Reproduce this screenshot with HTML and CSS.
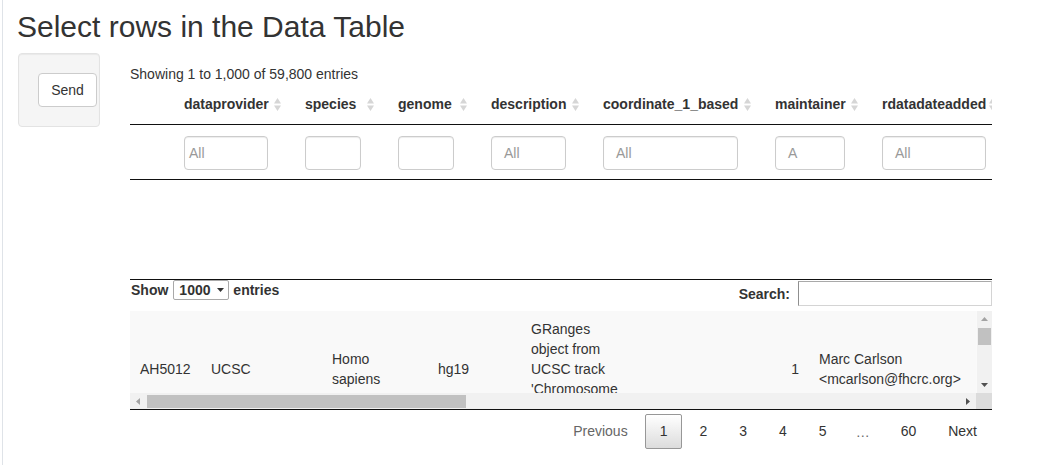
FILE: index.html
```html
<!DOCTYPE html>
<html lang="en">
<head>
<meta charset="utf-8">
<title>Select rows in the Data Table</title>
<link rel="stylesheet" href="styles.css">
</head>
<body>
<div class="frame">
  <h2 class="title">Select rows in the Data Table</h2>
  <div class="layout">
    <aside class="well"><button class="btn" type="button">Send</button></aside>
    <main class="main">
      <div class="info">Showing 1 to 1,000 of 59,800 entries</div>
      <div class="head-wrap">
        <table class="head">
          <colgroup>
            <col class="c-id"><col class="c-dp"><col class="c-sp"><col class="c-ge"><col class="c-de"><col class="c-co"><col class="c-ma"><col class="c-rd">
          </colgroup>
          <thead>
            <tr>
              <th></th>
              <th><span class="th-in">dataprovider<svg class="sort" viewBox="0 0 7 13" width="7" height="13"><path d="M3.5 0L7 5.5H0Z M0 7.5H7L3.5 13Z"/></svg></span></th>
              <th><span class="th-in">species<svg class="sort" viewBox="0 0 7 13" width="7" height="13"><path d="M3.5 0L7 5.5H0Z M0 7.5H7L3.5 13Z"/></svg></span></th>
              <th><span class="th-in">genome<svg class="sort" viewBox="0 0 7 13" width="7" height="13"><path d="M3.5 0L7 5.5H0Z M0 7.5H7L3.5 13Z"/></svg></span></th>
              <th><span class="th-in">description<svg class="sort" viewBox="0 0 7 13" width="7" height="13"><path d="M3.5 0L7 5.5H0Z M0 7.5H7L3.5 13Z"/></svg></span></th>
              <th><span class="th-in">coordinate_1_based<svg class="sort" viewBox="0 0 7 13" width="7" height="13"><path d="M3.5 0L7 5.5H0Z M0 7.5H7L3.5 13Z"/></svg></span></th>
              <th><span class="th-in">maintainer<svg class="sort" viewBox="0 0 7 13" width="7" height="13"><path d="M3.5 0L7 5.5H0Z M0 7.5H7L3.5 13Z"/></svg></span></th>
              <th><span class="th-in">rdatadateadded<svg class="sort" viewBox="0 0 7 13" width="7" height="13"><path d="M3.5 0L7 5.5H0Z M0 7.5H7L3.5 13Z"/></svg></span></th>
            </tr>
            <tr class="filters">
              <td></td>
              <td><span class="fi f-dp f-tight">All</span></td>
              <td><span class="fi f-sp"></span></td>
              <td><span class="fi f-ge"></span></td>
              <td><span class="fi f-de">All</span></td>
              <td><span class="fi f-co">All</span></td>
              <td><span class="fi f-ma">A</span></td>
              <td><span class="fi f-rd">All</span></td>
            </tr>
          </thead>
        </table>
      </div>
      <div class="gap"></div>
      <div class="controls">
        <div class="length">
          <span>Show</span>
          <span class="select">1000<svg class="caret" viewBox="0 0 7 4" width="7" height="4"><path d="M0 0H7L3.5 4Z"/></svg></span>
          <span>entries</span>
        </div>
        <div class="search">
          <span>Search:</span>
          <span class="search-box"></span>
        </div>
      </div>
      <div class="scroll">
        <div class="scroll-top">
          <div class="viewport">
            <table class="body">
              <colgroup>
                <col class="b-id"><col class="b-dp"><col class="b-sp"><col class="b-ge"><col class="b-de"><col class="b-co"><col class="b-ma">
              </colgroup>
              <tbody>
                <tr class="odd">
                  <td>AH5012</td>
                  <td>UCSC</td>
                  <td>Homo sapiens</td>
                  <td>hg19</td>
                  <td>GRanges object from UCSC track 'Chromosome Band'</td>
                  <td class="num">1</td>
                  <td>Marc Carlson &lt;mcarlson@fhcrc.org&gt;</td>
                </tr>
              </tbody>
            </table>
          </div>
          <div class="vbar">
            <span class="arrow"><svg viewBox="0 0 7 4" width="7" height="4"><path class="dis" d="M3.5 0L7 4H0Z"/></svg></span>
            <span class="vthumb"></span>
            <span class="fill"></span>
            <span class="arrow"><svg viewBox="0 0 7 4" width="7" height="4"><path d="M0 0H7L3.5 4Z"/></svg></span>
          </div>
        </div>
        <div class="hbar-row">
          <div class="hbar">
            <span class="arrow"><svg viewBox="0 0 4 7" width="4" height="7"><path class="dis" d="M4 0V7L0 3.5Z"/></svg></span>
            <span class="hthumb"></span>
            <span class="fill"></span>
            <span class="arrow"><svg viewBox="0 0 4 7" width="4" height="7"><path d="M0 0L4 3.5L0 7Z"/></svg></span>
          </div>
          <div class="corner"></div>
        </div>
      </div>
      <div class="pager">
        <span class="pg prev">Previous</span>
        <span class="pg current">1</span>
        <span class="pg">2</span>
        <span class="pg">3</span>
        <span class="pg">4</span>
        <span class="pg">5</span>
        <span class="ellipsis">…</span>
        <span class="pg">60</span>
        <span class="pg">Next</span>
      </div>
    </main>
  </div>
</div>
</body>
</html>
```

FILE: styles.css
```css
html, body {
  margin: 0;
  padding: 0;
  background: #fff;
}

body {
  font-family: "Liberation Sans", Arial, Helvetica, sans-serif;
  font-size: 14px;
  line-height: 20px;
  color: #333;
}

.frame {
  margin-left: 2px;
  border-left: 1px solid #dfe3e8;
  height: 100vh;
  box-sizing: border-box;
  padding: 0 15px;
  overflow: hidden;
}

.title {
  margin: 10px 0 10px -1px;
  font-size: 30px;
  line-height: 33px;
  font-weight: 500;
  color: #333;
}

.layout {
  display: flex;
  align-items: flex-start;
  gap: 30px;
}

.well {
  flex: none;
  width: 82px;
  height: 74px;
  box-sizing: border-box;
  padding: 19px;
  background: #f5f5f5;
  border: 1px solid #e3e3e3;
  border-radius: 4px;
  box-shadow: inset 0 1px 1px rgba(0, 0, 0, .05);
}

.btn {
  display: block;
  width: 59px;
  height: 34px;
  box-sizing: border-box;
  padding: 6px 12px;
  border: 1px solid #ccc;
  border-radius: 4px;
  background: #fff;
  font: inherit;
  line-height: 20px;
  color: #333;
}

.main {
  flex: none;
  width: 862px;
  padding-top: 11px;
}

.info {
  height: 20px;
}

.head-wrap {
  overflow: hidden;
}

table {
  border-collapse: separate;
  border-spacing: 0;
  table-layout: fixed;
}

table.head {
  width: 880px;
}

.c-id { width: 44px; }
.c-dp { width: 121px; }
.c-sp { width: 93px; }
.c-ge { width: 93px; }
.c-de { width: 112px; }
.c-co { width: 172px; }
.c-ma { width: 107px; }
.c-rd { width: 138px; }

.head th {
  padding: 10px 14px 10px 10px;
  height: 20px;
  text-align: left;
  font-weight: bold;
  color: #333;
  border-bottom: 1px solid #111;
  white-space: nowrap;
}

.th-in {
  display: flex;
  align-items: center;
}

.sort {
  flex: none;
  margin-left: auto;
  fill: #d6d6d6;
}

.filters td {
  padding: 11px 10px 9px;
  border-bottom: 1px solid #111;
}

.fi {
  display: block;
  height: 34px;
  box-sizing: border-box;
  padding: 0 12px;
  border: 1px solid #ccc;
  border-radius: 4px;
  line-height: 32px;
  color: #999;
  background: #fff;
  box-shadow: inset 0 1px 1px rgba(0, 0, 0, .075);
  white-space: nowrap;
  overflow: hidden;
}

.f-tight { padding-left: 4px; }
.f-dp { width: 84px; }
.f-sp { width: 56px; }
.f-ge { width: 56px; }
.f-de { width: 75px; }
.f-co { width: 135px; }
.f-ma { width: 70px; }
.f-rd { width: 104px; }

.gap {
  height: 99px;
}

.controls {
  display: flex;
  justify-content: space-between;
  align-items: flex-start;
  height: 31px;
  border-top: 1px solid #111;
  font-weight: bold;
}

.length {
  display: flex;
  align-items: center;
  gap: 4px;
  height: 20px;
  margin-left: 1px;
}

.length > span:first-child {
  margin-right: 1px;
}

.select {
  display: flex;
  align-items: center;
  justify-content: space-between;
  width: 56px;
  height: 20px;
  box-sizing: border-box;
  padding: 0 4px 0 5px;
  border: 1px solid #a9a9a9;
  border-radius: 2px;
  background: #fff;
}

.caret {
  fill: #333;
}

.search {
  display: flex;
  align-items: center;
  gap: 8px;
  margin-top: 1px;
}

.search-box {
  display: block;
  width: 194px;
  height: 25px;
  box-sizing: border-box;
  border: 1px solid #d4d4d4;
  border-left-color: #8f8f8f;
  border-top-color: #a9a9a9;
  background: #fff;
}

.scroll {
  border-bottom: 1px solid #111;
}

.scroll-top {
  display: flex;
  height: 82px;
}

.viewport {
  flex: 1;
  overflow: hidden;
  background: #f9f9f9;
}

table.body {
  width: 849px;
}

.b-id { width: 71px; }
.b-dp { width: 121px; }
.b-sp { width: 106px; }
.b-ge { width: 93px; }
.b-de { width: 105px; }
.b-co { width: 183px; }
.b-ma { width: 170px; }

.body td {
  padding: 8px 10px;
  vertical-align: middle;
  color: #333;
}

.body td.num {
  text-align: right;
}

.vbar {
  flex: none;
  width: 16px;
  display: flex;
  flex-direction: column;
  align-items: center;
  background: #f1f1f1;
  border-left: 1px solid #fafafa;
  box-sizing: border-box;
}

.arrow {
  flex: none;
  width: 16px;
  height: 16px;
  display: flex;
  align-items: center;
  justify-content: center;
}

.arrow path {
  fill: #505050;
}

.arrow path.dis {
  fill: #a3a3a3;
}

.fill {
  flex: 1;
}

.vthumb {
  flex: none;
  width: 13px;
  height: 17px;
  margin-top: 1px;
  background: #c1c1c1;
}

.hbar-row {
  display: flex;
  height: 16px;
}

.hbar {
  flex: 1;
  display: flex;
  align-items: center;
  background: #f1f1f1;
}

.hthumb {
  flex: none;
  width: 319px;
  height: 13px;
  margin-left: 1px;
  background: #c1c1c1;
}

.corner {
  flex: none;
  width: 16px;
  background: #dcdcdc;
}

.pager {
  display: flex;
  justify-content: flex-end;
  align-items: center;
  margin-top: 4px;
}

.pg {
  padding: 7px 14px;
  line-height: 19px;
  margin-left: 2px;
  border: 1px solid transparent;
  border-radius: 2px;
  color: #333;
}

.pg.prev {
  color: #666;
}

.pg.current {
  border-color: #979797;
  background: linear-gradient(#fff 0%, #dcdcdc 100%);
}

.ellipsis {
  padding: 0 14px;
  color: #666;
}
```
